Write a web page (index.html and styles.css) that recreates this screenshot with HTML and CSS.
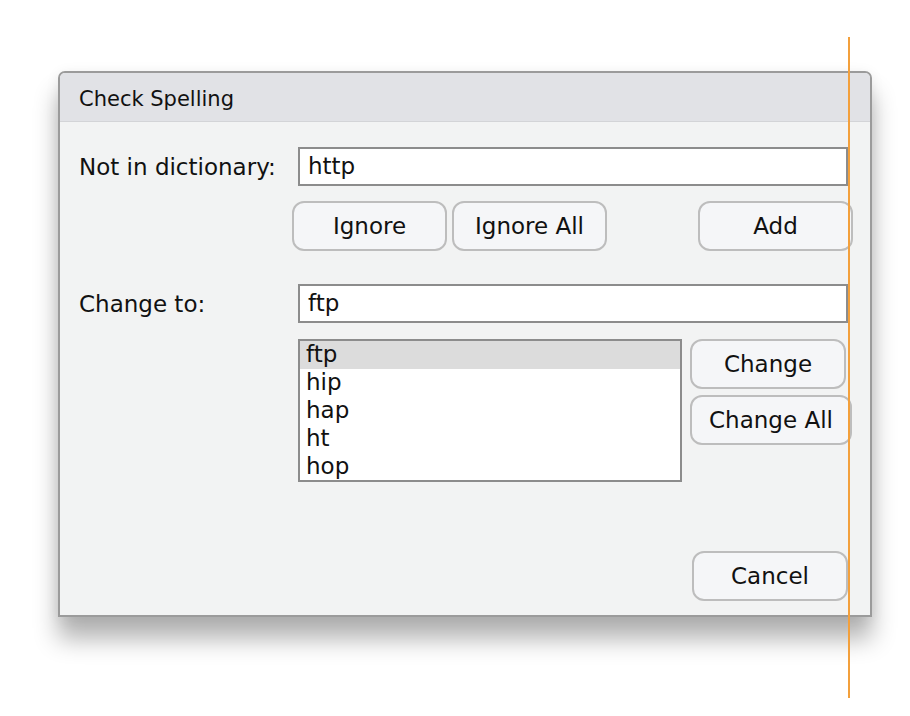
FILE: index.html
```
<!DOCTYPE html>
<html>
<head>
<meta charset="utf-8">
<link rel="stylesheet" href="styles.css">
</head>
<body>
<div class="dialog">
  <div class="titlebar">Check Spelling</div>
  <div class="content">
    <div class="row">
      <div class="label">Not in dictionary:</div>
      <div class="field">http</div>
    </div>
    <div class="btnrow">
      <div class="btn b-ignore">Ignore</div>
      <div class="btn b-ignoreall">Ignore All</div>
      <div class="btn b-add">Add</div>
    </div>
    <div class="row row2">
      <div class="label">Change to:</div>
      <div class="field">ftp</div>
    </div>
    <div class="listrow">
      <div class="list">
        <div class="item sel">ftp</div>
        <div class="item">hip</div>
        <div class="item">hap</div>
        <div class="item">ht</div>
        <div class="item">hop</div>
      </div>
      <div class="side">
        <div class="btn b-change">Change</div>
        <div class="btn b-changeall">Change All</div>
      </div>
    </div>
    <div class="footer">
      <div class="btn b-cancel">Cancel</div>
    </div>
  </div>
</div>
<div class="guide"></div>
</body>
</html>
```
FILE: styles.css
```
html, body {
  margin: 0;
  padding: 0;
  background: #ffffff;
}
body {
  width: 910px;
  height: 716px;
  position: relative;
  overflow: hidden;
  font-family: "DejaVu Sans", "Liberation Sans", sans-serif;
  font-size: 23px;
  color: #111;
}
.dialog {
  position: absolute;
  left: 58px;
  top: 71px;
  width: 810px;
  height: 542px;
  border: 2px solid #9b9b9b;
  border-radius: 7px 7px 0 0;
  background: #f2f3f3;
  box-shadow: 0 22px 24px rgba(0,0,0,0.3), 0 2px 14px rgba(0,0,0,0.07);
}
.titlebar {
  height: 48px;
  line-height: 52px;
  padding-left: 19px;
  font-size: 21px;
  background: #e1e2e6;
  border-bottom: 1px solid #d3d4d7;
  border-radius: 5px 5px 0 0;
}
.content {
  padding: 25px 0 0 19px;
}
.row {
  display: flex;
  align-items: center;
  height: 39px;
}
.row2 {
  margin-top: 33px;
}
.label {
  width: 219px;
  flex: none;
}
.field {
  box-sizing: border-box;
  width: 550px;
  height: 39px;
  border: 2px solid #8c8c8c;
  background: #fff;
  padding-left: 8px;
  line-height: 35px;
}
.btn {
  box-sizing: border-box;
  height: 50px;
  border: 2px solid #bdbdbd;
  border-radius: 12px;
  background: #f5f6f8;
  text-align: center;
  line-height: 46px;
  flex: none;
}
.btnrow {
  display: flex;
  margin-top: 15px;
}
.b-ignore { margin-left: 213px; width: 155px; }
.b-ignoreall { margin-left: 5px; width: 155px; }
.b-add { margin-left: 91px; width: 155px; }
.listrow {
  display: flex;
  margin-top: 16px;
}
.list {
  box-sizing: border-box;
  margin-left: 219px;
  width: 384px;
  height: 143px;
  border: 2px solid #8c8c8c;
  background: #fff;
}
.item {
  height: 28px;
  line-height: 26px;
  padding-left: 6px;
}
.item.sel {
  background: #dcdcdc;
}
.side {
  display: flex;
  flex-direction: column;
  gap: 6px;
  margin-left: 8px;
}
.b-change { width: 156px; }
.b-changeall { width: 162px; }
.footer {
  display: flex;
  margin-top: 69px;
}
.b-cancel {
  margin-left: 613px;
  width: 156px;
}
.guide {
  position: absolute;
  left: 848px;
  top: 37px;
  width: 2px;
  height: 661px;
  background: #f3a03c;
}
```
